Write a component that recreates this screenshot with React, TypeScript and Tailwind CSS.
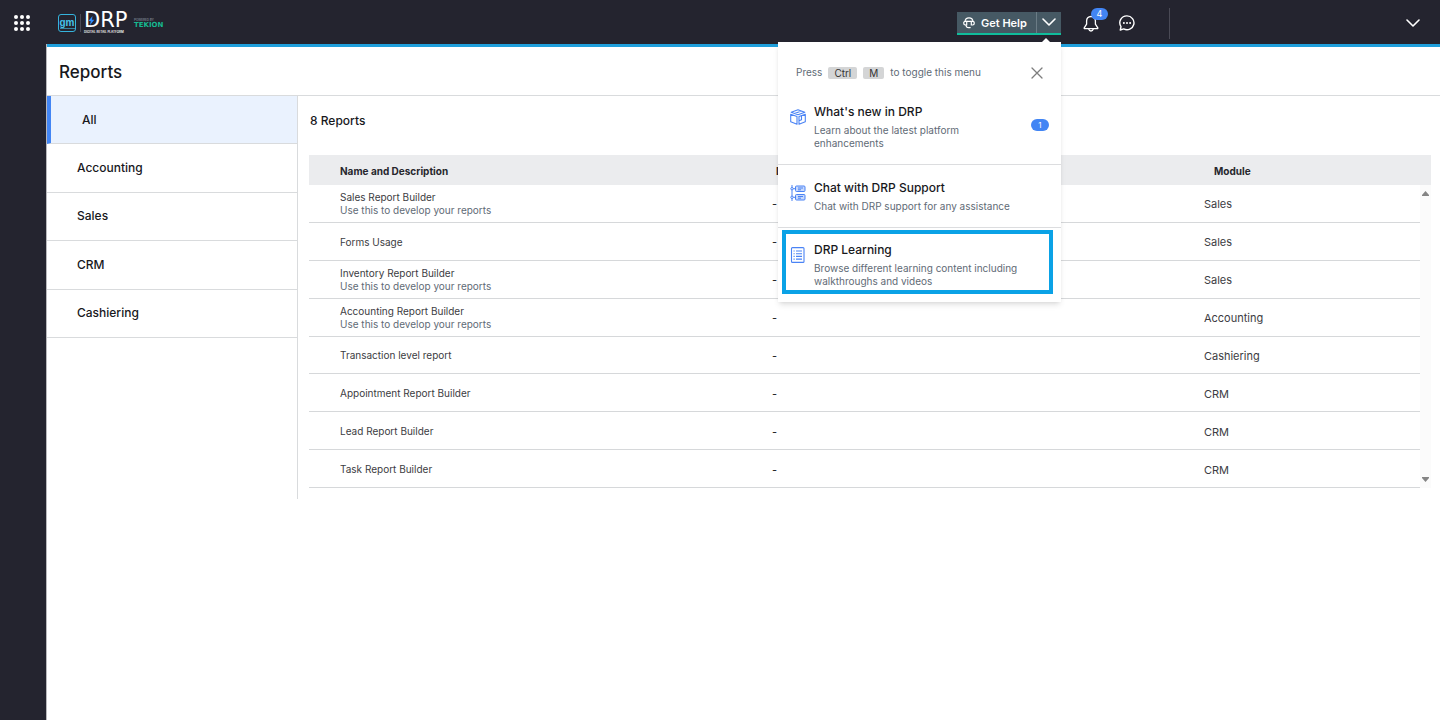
import { useState } from 'react';
import clsx from 'clsx';

const categories = ['All', 'Accounting', 'Sales', 'CRM', 'Cashiering'];

const reports = [
  { name: 'Sales Report Builder', description: 'Use this to develop your reports', module: 'Sales' },
  { name: 'Forms Usage', module: 'Sales' },
  { name: 'Inventory Report Builder', description: 'Use this to develop your reports', module: 'Sales' },
  { name: 'Accounting Report Builder', description: 'Use this to develop your reports', module: 'Accounting' },
  { name: 'Transaction level report', module: 'Cashiering' },
  { name: 'Appointment Report Builder', module: 'CRM' },
  { name: 'Lead Report Builder', module: 'CRM' },
  { name: 'Task Report Builder', module: 'CRM' },
];

function GridIcon() {
  return (
    <svg width="16" height="16" viewBox="0 0 16 16" fill="white">
      {[2, 8, 14].map((y) => [2, 8, 14].map((x) => <circle key={`${x}-${y}`} cx={x} cy={y} r="2" />))}
    </svg>
  );
}

function Logo() {
  return (
    <div className="flex items-center text-white">
      <div className="flex h-[18px] w-[18px] items-center justify-center rounded-[3px] border border-[#35b3dc] font-['Liberation_Sans'] text-[10px] font-bold text-[#45c3ea]">
        <span className="border-b border-[#45c3ea]/60 leading-[11px]">gm</span>
      </div>
      <div className="ml-1 h-[18px] w-px bg-[#4a4a55]" />
      <div className="ml-[3px] flex w-[47px] flex-col">
        <div className="relative font-['DejaVu_Sans'] text-[21px] leading-[17px]">
          DRP
          <svg className="absolute top-1 left-1" width="7" height="9" viewBox="0 0 7 9" fill="#2f8dff">
            <path d="M4.500 0 .5 5h2.200L2 9l4.300-5.200H4z" />
          </svg>
        </div>
        <span className="pt-px whitespace-nowrap text-[3px] leading-[4px] font-semibold">DIGITAL RETAIL PLATFORM</span>
      </div>
      <div className="ml-[3px] flex flex-col">
        <span className="text-[3px] leading-[4px] text-gray-400">POWERED BY</span>
        <span className="font-['DejaVu_Sans'] text-[7px] leading-[7px] font-bold text-[#17b890]">TEKION</span>
      </div>
    </div>
  );
}

function HeadsetIcon() {
  return (
    <svg width="12" height="12" viewBox="0 0 12 12" fill="none" stroke="white" strokeWidth="1.2" strokeLinecap="round">
      <path d="M2 4.500C2.200 2 3.800.8 6 .8S9.800 2 10 4.500" />
      <path d="M3.700 4.300H2.400C1.200 4.300.7 5 .7 6.100s.6 1.900 1.700 1.900h1.300zM8.300 4.300h1.300c1.200 0 1.700.7 1.700 1.800S10.700 8 9.600 8H8.300z" />
      <path d="M3.700 4.300h4.600M3 8.200c.2 1.600 1.100 2.400 2.500 2.400M6 10.600h1.200" />
    </svg>
  );
}

function ChevronIcon() {
  return (
    <svg width="14" height="8" viewBox="0 0 14 8" fill="none" stroke="white" strokeWidth="1.600" strokeLinecap="round" strokeLinejoin="round">
      <path d="M1 1l6 6 6-6" />
    </svg>
  );
}

function BellIcon() {
  return (
    <svg width="16" height="17" viewBox="0 0 16 17" fill="none" stroke="white" strokeWidth="1.300" strokeLinecap="round" strokeLinejoin="round">
      <path d="M8 1.500C5.200 1.500 3.600 3.500 3.600 6v3.200L1.200 12.800c-.2.500 0 .9.600.9h12.400c.6 0 .8-.4.600-.9L12.400 9.200V6c0-2.500-1.600-4.500-4.400-4.500z" />
      <path d="M5.800 14.200c.3 1.300 1.100 1.800 2.200 1.800s1.900-.5 2.200-1.800" />
    </svg>
  );
}

function ChatIcon() {
  return (
    <svg width="16" height="16" viewBox="0 0 16 16" fill="none" stroke="white" strokeWidth="1.400" strokeLinejoin="round">
      <path d="M8 .9a7 6.900 0 1 1-3.300 13L1.300 15l.7-3.400A7 6.900 0 0 1 8 .9z" />
      <g fill="white" stroke="none">
        <circle cx="4.900" cy="7.900" r="1" />
        <circle cx="8" cy="7.900" r="1" />
        <circle cx="11.100" cy="7.900" r="1" />
      </g>
    </svg>
  );
}

function BoxIcon() {
  return (
    <svg width="16" height="16" viewBox="0 0 16 16" fill="none" stroke="#4a83f5" strokeWidth="1.100" strokeLinejoin="round">
      <path d="M8 .8 14.800 3.200 8 5.800 1.200 3.200zM4.500 4.500 11.500 2" />
      <path d="M.7 5.200 7 7.600v7.600L.7 12.700zM15.300 5.200 9 7.600v7.600l6.300-2.500zM9 11.800l2.500-1V7" />
    </svg>
  );
}

function SupportIcon() {
  return (
    <svg width="16" height="16" viewBox="0 0 16 16" fill="none" stroke="#4a83f5" strokeWidth="1">
      <g fill="#c9dafc">
        <rect x="5.500" y="1" width="9.500" height="5.500" rx="1" />
        <rect x="5.500" y="9.500" width="9.500" height="5.500" rx="1" />
      </g>
      <path d="M2 0v16M2 3.700h3.500M2 12.300h3.500M8 3h5M8 4.800h3M8 11.500h5M8 13.200h3" />
      <circle cx="2" cy="3.700" r="1.200" fill="white" />
      <circle cx="2" cy="12.300" r="1.200" fill="white" />
    </svg>
  );
}

function ListIcon() {
  return (
    <svg width="16" height="16" viewBox="0 0 16 16" fill="none" stroke="#4a83f5" strokeWidth="1.100">
      <rect x="1.500" y=".6" width="12.500" height="14.800" rx="1" />
      <path d="M6 4h6M6 6.700h6M6 9.400h6M6 12.100h6M3.500 4h1.200M3.500 6.700h1.200M3.500 9.400h1.200M3.500 12.100h1.200" />
    </svg>
  );
}

const menuText = 'text-[10px] leading-[13px] text-[#5f6b76]';
const menuTitle = 'text-[12px] leading-[16px] font-medium text-[#18181c]';
const keyCap = 'ml-1.5 rounded-xs bg-[#d4d5d6] px-1.5 text-[10px] leading-[12px] text-[#333] [font-family:Inter,sans-serif]';

function HelpMenu({ onClose }: { onClose: () => void }) {
  return (
    <div className="absolute top-[30px] right-0 z-20 w-[283px] bg-white shadow-md">
      <div className="absolute -top-1 right-2.5 h-0 w-0 border-x-5 border-b-5 border-x-transparent border-b-white" />
      <div className={clsx('flex h-[62px] items-center px-[18px]', menuText)}>
        Press
        <kbd className={keyCap}>Ctrl</kbd>
        <kbd className={keyCap}>M</kbd>
        <span className="ml-1.5">to toggle this menu</span>
        <button aria-label="Close" onClick={onClose} className="ml-auto">
          <svg width="12" height="12" viewBox="0 0 12 12" stroke="#7d7d7d" strokeWidth="1.300" strokeLinecap="round">
            <path d="M1 1l10 10M11 1 1 11" />
          </svg>
        </button>
      </div>
      <button className="flex w-full items-start border-b border-[#dcdddf] px-3 pb-3.5 text-left">
        <span className="mt-[5px]"><BoxIcon /></span>
        <span className="ml-2 flex w-[180px] flex-col gap-1">
          <span className={menuTitle}>What's new in DRP</span>
          <span className={menuText}>Learn about the latest platform enhancements</span>
        </span>
        <span className="mt-[15px] ml-auto w-[18px] rounded-full bg-[#4285f4] text-center text-[8px] leading-[12px] text-white">1</span>
      </button>
      <button className="flex w-full items-start border-b border-[#dcdddf] px-3 pt-[15px] pb-[14px] text-left">
        <span className="mt-[5px]"><SupportIcon /></span>
        <span className="ml-2 flex flex-col gap-1">
          <span className={menuTitle}>Chat with DRP Support</span>
          <span className={menuText}>Chat with DRP support for any assistance</span>
        </span>
      </button>
      <div className="pt-0.5 pr-2 pb-2 pl-1">
        <button className="flex w-full items-start border-4 border-[#0aa2e6] pt-2 pr-4 pb-0.5 pl-1 text-left">
          <span className="mt-[5px]"><ListIcon /></span>
          <span className="ml-2 flex flex-col gap-1">
            <span className={menuTitle}>DRP Learning</span>
            <span className={menuText}>Browse different learning content including walkthroughs and videos</span>
          </span>
        </button>
      </div>
    </div>
  );
}

function Header() {
  const [open, setOpen] = useState(true);

  return (
    <header className="flex h-[44px] items-center bg-[#24242f]">
      <button aria-label="Apps" className="ml-3.5 pt-0.5">
        <GridIcon />
      </button>
      <div className="ml-7 pt-0.5">
        <Logo />
      </div>
      <div className="ml-auto flex items-center pt-0.5">
        <div className="relative flex h-[23px] w-[104px] border-b-2 border-[#10bd9c] bg-[#465964] text-white">
          <button className="flex flex-1 items-center gap-1.5 pt-0.5 pl-1.5 text-[11px] font-semibold">
            <HeadsetIcon />
            Get Help
          </button>
          <button
            aria-label="Help options"
            onClick={() => setOpen(!open)}
            className="flex w-[25px] items-center justify-center border-l border-[#6b7c86]"
          >
            <ChevronIcon />
          </button>
          {open && <HelpMenu onClose={() => setOpen(false)} />}
        </div>
        <button aria-label="Notifications" className="relative ml-[22px]">
          <BellIcon />
          <span className="absolute -top-[7px] left-2 w-[17px] rounded-full bg-[#4285f4] text-center text-[9px] leading-[12px] text-white">
            4
          </span>
        </button>
        <button aria-label="Messages" className="ml-5">
          <ChatIcon />
        </button>
        <div className="ml-[34px] flex h-[31px] w-[271px] items-center justify-end border-l border-[#4a4a55] pr-5">
          <button aria-label="Account">
            <ChevronIcon />
          </button>
        </div>
      </div>
    </header>
  );
}

function ReportsTable() {
  return (
    <table className="h-[333px] w-full table-fixed border-separate border-spacing-0 text-left">
      <colgroup>
        <col className="w-[38.500%]" />
        <col className="w-[38.500%]" />
        <col />
        <col className="w-[11px]" />
      </colgroup>
      <thead>
        <tr className="h-[30px] bg-[#ebecee] text-[10px] text-[#26262c]">
          <th className="pt-0.5 pl-[31px] font-bold">Name and Description</th>
          <th className="pt-0.5 pl-[35px] font-bold">Department</th>
          <th className="pt-0.5 pl-[41px] font-bold">Module</th>
          <th />
        </tr>
      </thead>
      <tbody>
        {reports.map((report, i) => (
          <tr key={report.name} className="h-[37px]">
            <td className="border-b border-[#d6d8da] pt-1 pb-0.5 pl-[31px] text-[10px] leading-[13px] text-[#3c3c42]">
              {report.name}
              {report.description && <div className="text-[#5f6b76]">{report.description}</div>}
            </td>
            <td className="border-b border-[#d6d8da] pt-0.5 pl-[31px] text-[11px] leading-[16px]">-</td>
            <td className="border-b border-[#d6d8da] pt-0.5 pl-[31px] text-[11px] leading-[16px] text-[#3c3c42]">{report.module}</td>
            {/* scroll track, one half per arrow */}
            {i % 4 === 0 && (
              <td rowSpan={4} aria-hidden="true" className={clsx('bg-[#fbfbfb] py-1.5', i === 0 ? 'align-top' : 'align-bottom')}>
                <svg className={clsx('mx-auto', i > 0 && 'rotate-180')} width="7" height="5" viewBox="0 0 7 5" fill="#858585">
                  <path d="M3.500 0 7 4v1H0V4z" />
                </svg>
              </td>
            )}
          </tr>
        ))}
      </tbody>
    </table>
  );
}

export default function App() {
  const [category, setCategory] = useState('All');

  return (
    <div className="flex min-h-screen flex-col bg-white font-['Inter',sans-serif] text-[#18181c]">
      <Header />
      <div className="flex flex-1">
        <aside className="w-[46px] shrink-0 bg-[#24242f]" />
        <main className="flex-1 border-l border-[#b8b8bc]">
          <div className="h-[3px] bg-[#1f9fdb]" />
          <h1 className="flex h-[49px] items-center border-b border-[#d9dbdd] pt-1 pl-3 text-[17px] font-medium">Reports</h1>
          <div className="flex">
            <nav className="h-[403px] w-[251px] shrink-0 border-r border-[#d9dbdd]">
              <div className="grid h-[242px] grid-rows-5">
                {categories.map((name) => (
                  <button
                    key={name}
                    onClick={() => setCategory(name)}
                    className={clsx(
                      'border-b border-[#d9dbdd] text-left text-[12px] font-medium',
                      name === category ? 'border-l-4 border-l-[#4285f4] bg-[#eaf2fe] pl-[31px]' : 'pl-[30px]'
                    )}
                  >
                    {name}
                  </button>
                ))}
              </div>
            </nav>
            <section className="flex-1 pr-[9px] pl-[11px]">
              <h2 className="flex h-[59px] items-center pb-2.5 pl-px text-[12px] font-medium">8 Reports</h2>
              <ReportsTable />
            </section>
          </div>
        </main>
      </div>
    </div>
  );
}
